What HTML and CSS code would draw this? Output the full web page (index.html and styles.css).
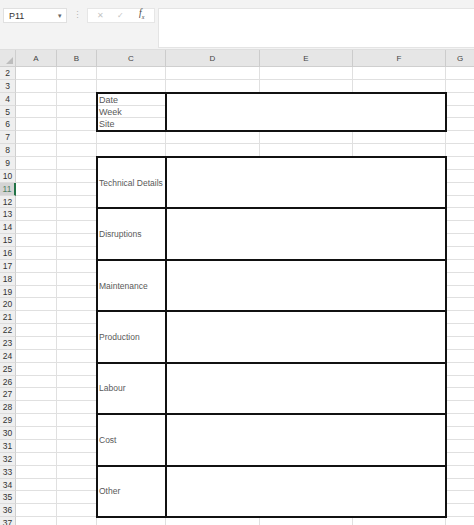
FILE: index.html
```html
<!DOCTYPE html>
<html>
<head>
<meta charset="utf-8">
<link rel="stylesheet" href="styles.css">
</head>
<body>
<div class="app">
  <div class="toolbar">
    <div class="namebox"><span class="ref">P11</span><span class="caret">&#9662;</span></div>
    <div class="dots">&#8942;</div>
    <div class="fbtns">
      <span class="fb cancel">&#10005;</span>
      <span class="fb enter">&#10003;</span>
      <span class="fb fx"><i>f</i><sub>x</sub></span>
    </div>
    <div class="formula"></div>
  </div>
  <div class="sheet">
    <div class="corner"><span class="tri"></span></div>
    <div class="colh">A</div>
    <div class="colh">B</div>
    <div class="colh">C</div>
    <div class="colh">D</div>
    <div class="colh">E</div>
    <div class="colh">F</div>
    <div class="colh">G</div>

    <div class="rowh">2</div><div class="rowh">3</div><div class="rowh">4</div><div class="rowh">5</div>
    <div class="rowh">6</div><div class="rowh">7</div><div class="rowh">8</div><div class="rowh">9</div>
    <div class="rowh">10</div><div class="rowh sel">11</div><div class="rowh">12</div><div class="rowh">13</div>
    <div class="rowh">14</div><div class="rowh">15</div><div class="rowh">16</div><div class="rowh">17</div>
    <div class="rowh">18</div><div class="rowh">19</div><div class="rowh">20</div><div class="rowh">21</div>
    <div class="rowh">22</div><div class="rowh">23</div><div class="rowh">24</div><div class="rowh">25</div>
    <div class="rowh">26</div><div class="rowh">27</div><div class="rowh">28</div><div class="rowh">29</div>
    <div class="rowh">30</div><div class="rowh">31</div><div class="rowh">32</div><div class="rowh">33</div>
    <div class="rowh">34</div><div class="rowh">35</div><div class="rowh">36</div><div class="rowh">37</div>

    <div class="col c2"></div>
    <div class="col c3"></div>
    <div class="col c4"></div>
    <div class="col c5"></div>
    <div class="col c6"></div>
    <div class="col c7"></div>
    <div class="col c8"></div>

    <div class="infobox">
      <div class="ilabel">Date</div>
      <div class="ivalue"></div>
      <div class="ilabel">Week</div>
      <div class="ilabel last">Site</div>
    </div>

    <div class="section s1"><div class="slabel">Technical Details</div><div class="svalue"></div></div>
    <div class="section s2"><div class="slabel">Disruptions</div><div class="svalue"></div></div>
    <div class="section s3"><div class="slabel">Maintenance</div><div class="svalue"></div></div>
    <div class="section s4"><div class="slabel">Production</div><div class="svalue"></div></div>
    <div class="section s5"><div class="slabel">Labour</div><div class="svalue"></div></div>
    <div class="section s6"><div class="slabel">Cost</div><div class="svalue"></div></div>
    <div class="section s7"><div class="slabel">Other</div><div class="svalue"></div></div>
  </div>
</div>
</body>
</html>
```
FILE: styles.css
```css
* { box-sizing: border-box; }
html, body { margin: 0; padding: 0; }
body {
  width: 474px;
  height: 525px;
  overflow: hidden;
  background: #ffffff;
  font-family: "Liberation Sans", Arial, sans-serif;
}
.app { width: 474px; height: 525px; overflow: hidden; }

.toolbar {
  height: 50px;
  background: #f3f3f3;
  display: flex;
  align-items: flex-start;
  padding: 8px 0 0 3px;
  border-bottom: 1px solid #dedede;
}
.namebox {
  width: 64px;
  height: 15px;
  background: #fff;
  border: 1px solid #e0e0e0;
  display: flex;
  align-items: center;
  justify-content: space-between;
  padding: 0 4px 0 5px;
}
.ref { font-size: 9px; color: #333; }
.caret { font-size: 7px; color: #666; }
.dots {
  width: 20px;
  text-align: center;
  font-size: 9px;
  color: #b5b5b5;
  line-height: 15px;
}
.fbtns {
  width: 68px;
  height: 15px;
  background: #fff;
  border: 1px solid #e6e6e6;
  display: flex;
  align-items: center;
  justify-content: space-around;
  padding: 0 2px;
}
.fb { font-size: 8px; color: #c4c4c4; width: 18px; text-align: center; line-height: 13px; }
.fx { color: #444; font-family: "Liberation Serif", serif; font-size: 9.5px; }
.fx sub { font-size: 6px; font-style: italic; }
.formula {
  margin-left: 3px;
  flex: 1;
  height: 40px;
  background: #fff;
  border: 1px solid #e4e4e4;
  border-right: none;
}

.sheet {
  display: grid;
  grid-template-columns: 16px 41px 40px 69px 94px 93px 93px 1fr;
  grid-template-rows: 17px repeat(36, 12.86px);
  grid-auto-flow: column;
}
.corner {
  grid-column: 1; grid-row: 1;
  background: #e6e6e6;
  border-right: 1px solid #cfcfcf;
  border-bottom: 1px solid #cfcfcf;
  position: relative;
}
.tri {
  position: absolute;
  right: 2px; bottom: 2px;
  width: 0; height: 0;
  border-left: 7px solid transparent;
  border-bottom: 7px solid #bdbdbd;
}
.colh {
  grid-row: 1;
  background: #e6e6e6;
  border-right: 1px solid #cccccc;
  border-bottom: 1px solid #cfcfcf;
  font-size: 8px;
  color: #444;
  text-align: center;
  line-height: 17px;
}
.colh:nth-child(2) { grid-column: 2; }
.colh:nth-child(3) { grid-column: 3; }
.colh:nth-child(4) { grid-column: 4; }
.colh:nth-child(5) { grid-column: 5; }
.colh:nth-child(6) { grid-column: 6; }
.colh:nth-child(7) { grid-column: 7; }
.colh:nth-child(8) { grid-column: 8; border-right: none; }

.rowh {
  grid-column: 1;
  background: #efefef;
  border-right: 1px solid #cfcfcf;
  border-bottom: 1px solid #dcdcdc;
  font-size: 8.5px;
  color: #333;
  text-align: center;
  line-height: 12px;
}
.rowh.sel {
  background: #d4d4d4;
  color: #4f7f62;
  border-right: 2px solid #217346;
}

.col {
  grid-row: 2 / -1;
  border-right: 1px solid #e0e0e0;
  background: repeating-linear-gradient(to bottom, transparent 0, transparent 11.86px, #e0e0e0 11.86px, #e0e0e0 12.86px);
}
.c2 { grid-column: 2; }
.c3 { grid-column: 3; }
.c4 { grid-column: 4; }
.c5 { grid-column: 5; }
.c6 { grid-column: 6; }
.c7 { grid-column: 7; }
.c8 { grid-column: 8; border-right: none; }

.infobox {
  grid-column: 4 / 8;
  grid-row: 4 / 7;
  margin: -1px;
  border: 2px solid #111;
  display: grid;
  grid-template-columns: 67px 1fr;
  grid-template-rows: repeat(3, 1fr);
  grid-auto-flow: row;
}
.ilabel {
  grid-column: 1;
  font-size: 9px;
  color: #595959;
  padding-left: 1px;
  line-height: 12px;
}
.ivalue {
  grid-column: 2;
  grid-row: 1 / 4;
  background: #fff;
  border-left: 2px solid #111;
}

.section {
  grid-column: 4 / 8;
  margin: -1px;
  border: 2px solid #111;
  background: #fff;
  display: grid;
  grid-template-columns: 67px 1fr;
}
.s1 { grid-row: 9 / 13; }
.s2 { grid-row: 13 / 17; }
.s3 { grid-row: 17 / 21; }
.s4 { grid-row: 21 / 25; }
.s5 { grid-row: 25 / 29; }
.s6 { grid-row: 29 / 33; }
.s7 { grid-row: 33 / 37; }
.slabel {
  display: flex;
  align-items: center;
  font-size: 8.5px;
  color: #595959;
  padding-left: 1px;
  white-space: nowrap;
}
.svalue { border-left: 2px solid #111; }
```
